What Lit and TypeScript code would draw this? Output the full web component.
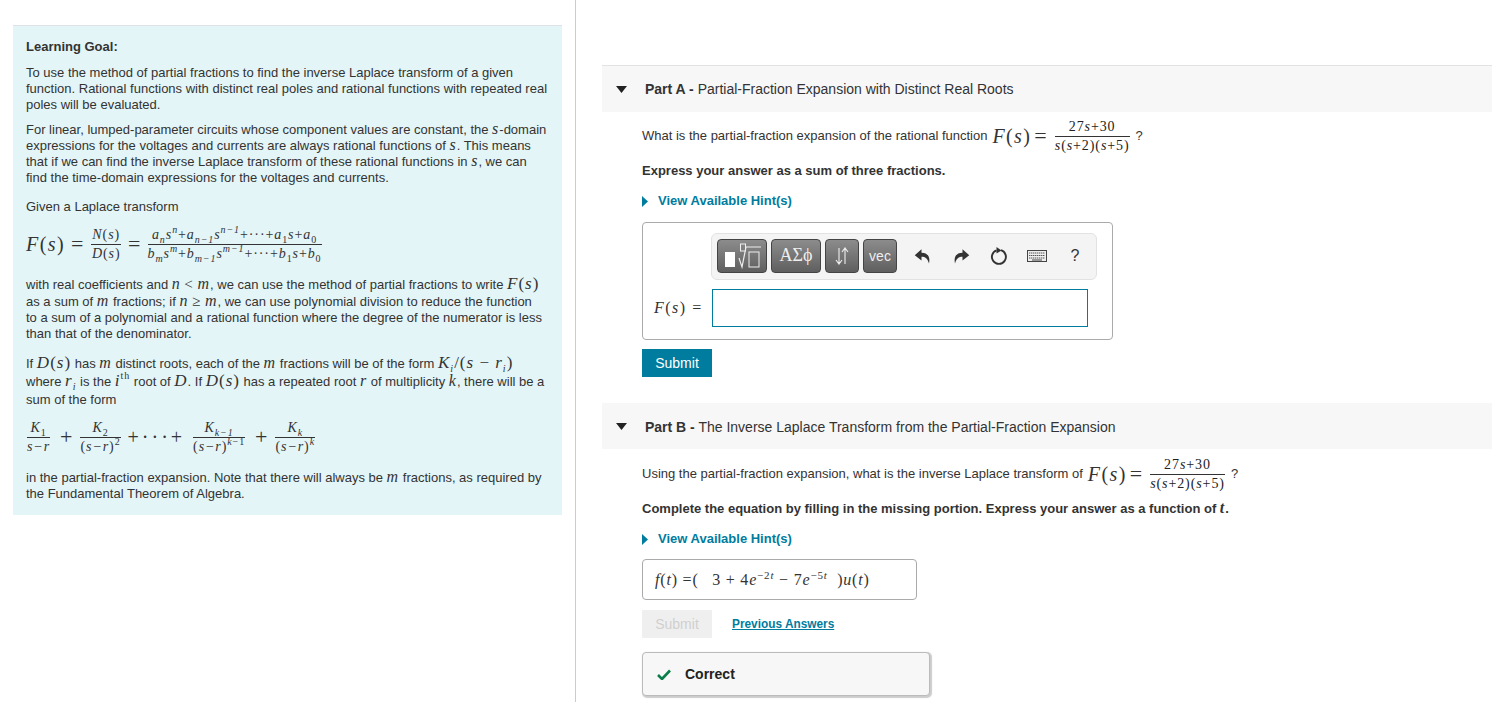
import { LitElement, html, css } from "lit";
import { customElement } from "lit/decorators.js";

const F = html`<span class="m md"><i>F</i>(<i>s</i>)</span>`;
const m = (t: string) => html`<i class="v">${t}</i>`;
const D = html`<span class="m md"><i>D</i>(<i>s</i>)</span>`;
const frac = (n: unknown, d: unknown, cls = "") =>
  html`<span class="frac ${cls}"><span class="num">${n}</span><span class="den">${d}</span></span>`;
const q = html`<span class="eq big"><span class="mf"><i>F</i>(<i>s</i>)</span><span class="rel qr">=</span>${frac(
  html`27<i>s</i>+30`,
  html`<i>s</i>(<i>s</i>+2)(<i>s</i>+5)`,
  "qf"
)}</span>`;
const chevron = html`<svg class="caret" width="11" height="7" viewBox="0 0 11 7"><path d="M0 0H11L5.5 7Z" fill="#222"/></svg>`;
const hintArrow = html`<svg width="6" height="11" viewBox="0 0 6 11"><path d="M0 0L6 5.5L0 11Z" fill="#007c9e"/></svg>`;

@customElement("app-root")
export class AppRoot extends LitElement {
  static styles = css`
    :host { display: block; height: 702px; overflow: hidden; background: #fff; color: #333; font: 13px/16px "Liberation Sans", Arial, sans-serif; }
    * { box-sizing: border-box; }
    .page { display: flex; height: 702px; }
    .left { width: 576px; flex: none; border-right: 1px solid #ccc; padding: 25px 13px 0; }
    .goal { width: 549px; height: 490px; background: #e4f5f7; border-top: 1px solid #dde3e5; padding: 13px 13px 0; }
    p { margin: 0; white-space: nowrap; }
    .g { font-weight: bold; }
    .mt10 { margin-top: 10px; } .mt9 { margin-top: 9px; } .mt13 { margin-top: 13px; } .mt14 { margin-top: 14px; } .mt11 { margin-top: 11px; } .mt15 { margin-top: 15px; }
    .tall { line-height: 18px; }
    .st { display: inline-block; width: 0; height: 5px; vertical-align: -5px; }
    .m, .v { font-family: "Liberation Serif", serif; font-size: 15px; line-height: 0; letter-spacing: 1px; }
    .v { font-style: italic; font-size: 16px; }
    .md { font-size: 17px; }
    .m sub, .m sup { font-size: 10px; line-height: 0; }
    .eqrow { display: flex; align-items: center; height: 36px; font-family: "Liberation Serif", serif; }
    .fx { padding-left: 1px; }
    .mf { font-size: 20px; white-space: nowrap; letter-spacing: 1.4px; }
    .rel { font-size: 22px; margin: 0 8px 0 6px; }
    .rel2 { margin: 0 7px 0 7px; }
    .qr { margin: 0 8px 0 3px; }
    .plus { font-size: 22px; margin: 0 8px 0 10px; }
    .more { letter-spacing: 3px; margin: 0 8px 0 7px; font-size: 20px; }
    .frac { display: inline-flex; flex-direction: column; align-items: center; text-align: center; font-family: "Liberation Serif", serif; font-size: 14px; line-height: 14px; white-space: nowrap; letter-spacing: .9px; }
    .num { border-bottom: 1px solid #333; padding: 0 1px 2px; width: 100%; }
    .den { padding-top: 2px; }
    .frac sub, .frac sup { font-size: 10px; line-height: 0; }
    .right { flex: 1; padding: 65px 0 0 26px; }
    .head { height: 47px; background: #f7f7f7; border-top: 1px solid #e2e2e2; display: flex; align-items: center; font-size: 14px; padding-left: 14px; }
    .headb { border-top-color: #f7f7f7; height: 46px; }
    .caret { margin-right: 18px; }
    .body { padding-left: 40px; font-size: 13px; }
    .qrow { display: flex; align-items: center; height: 36px; margin-top: 6px; }
    .qb { margin-top: 7px; }
    .qrow .end { margin-left: 6px; }
    .eq { display: inline-flex; align-items: center; margin-left: 5px; font-family: "Liberation Serif", serif; }
    .qf { font-size: 14px; color: #222; letter-spacing: .9px; }
    .instr { font-weight: bold; margin-top: 9px; }
    .hint { display: flex; align-items: center; gap: 10px; color: #007c9e; font-weight: bold; margin-top: 14px; font-size: 13px; }
    .box { width: 471px; height: 118px; border: 1px solid #aaa; border-radius: 4px; margin-top: 13px; padding: 10px 24px 0 11px; }
    .bar { width: 386px; height: 47px; margin-left: 57px; background: #f4f4f4; border: 1px solid #e2e2e2; border-radius: 6px; display: flex; align-items: center; padding: 0 0 2px 5px; }
    .tb { height: 34px; border-radius: 4px; border: 1px solid #444; background: linear-gradient(#8c8c8c, #5f5f5f); color: #eee; display: flex; align-items: center; justify-content: center; margin-right: 4px; }
    .t1 { width: 50px; } .t2 { width: 50px; font: 18px "Liberation Serif", serif; } .t3 { width: 34px; } .t4 { width: 34px; font-size: 14px; }
    .ic { width: 38px; display: flex; justify-content: center; align-items: center; color: #333; font-size: 16px; }
    .ic.first { margin-left: 3px; }
    .ansrow { display: flex; align-items: center; margin-top: 9px; }
    .lbl { width: 58px; font: 16px "Liberation Serif", serif; white-space: nowrap; letter-spacing: 1.5px; }
    .input { width: 376px; height: 38px; border: 1px solid #007c9e; background: #fff; }
    .btn { width: 70px; height: 28px; background: #007c9e; color: #fff; display: flex; align-items: center; justify-content: center; font-size: 14px; }
    .submit { margin-top: 9px; margin-bottom: 26px; }
    .ans { width: 275px; height: 41px; border: 1px solid #aaa; border-radius: 4px; margin-top: 12px; display: flex; align-items: center; padding-left: 12px; font: 16px "Liberation Serif", serif; white-space: pre; letter-spacing: .8px; }
    .ans sup { font-size: 11px; line-height: 0; }
    .sp { margin-left: 4px; }
    .actions { display: flex; align-items: center; margin-top: 10px; }
    .dis { background: #efefef; color: #cfcfcf; }
    .prev { margin-left: 20px; color: #007c9e; font-weight: bold; text-decoration: underline; font-size: 11.85px; }
    .ok { width: 288px; height: 44px; margin-top: 14px; background: #f7f7f7; border: 1px solid #bbb; border-radius: 4px; box-shadow: 1px 1px 1px 1px #ccc; display: flex; align-items: center; padding-left: 14px; gap: 14px; font-weight: bold; font-size: 14px; color: #222; }
  `;

  render() {
    return html`<div class="page">
      <div class="left"><div class="goal">
        <p class="g">Learning Goal:</p>
        <p class="mt10">To use the method of partial fractions to find the inverse Laplace transform of a given<br>function. Rational functions with distinct real poles and rational functions with repeated real<br>poles will be evaluated.</p>
        <p class="mt9">For linear, lumped-parameter circuits whose component values are constant, the ${m("s")}-domain<br>expressions for the voltages and currents are always rational functions of ${m("s")}. This means<br>that if we can find the inverse Laplace transform of these rational functions in ${m("s")}, we can<br>find the time-domain expressions for the voltages and currents.</p>
        <p class="mt13">Given a Laplace transform</p>
        <div class="eqrow mt11">
          <span class="mf"><i>F</i>(<i>s</i>)</span><span class="rel">=</span>
          ${frac(html`<i>N</i>(<i>s</i>)`, html`<i>D</i>(<i>s</i>)`)}
          <span class="rel rel2">=</span>
          ${frac(html`<i>a<sub>n</sub>s<sup>n</sup></i>+<i>a<sub>n−1</sub>s<sup>n−1</sup></i>+···+<i>a</i><sub>1</sub><i>s</i>+<i>a</i><sub>0</sub>`, html`<i>b<sub>m</sub>s<sup>m</sup></i>+<i>b<sub>m−1</sub>s<sup>m−1</sup></i>+···+<i>b</i><sub>1</sub><i>s</i>+<i>b</i><sub>0</sub>`)}
        </div>
        <p class="mt15"><span class="st"></span>with real coefficients and ${m("n")} <span class="m">&lt;</span> ${m("m")}, we can use the method of partial fractions to write ${F}<br>as a sum of ${m("m")} fractions; if ${m("n")} <span class="m">≥</span> ${m("m")}, we can use polynomial division to reduce the function<br>to a sum of a polynomial and a rational function where the degree of the numerator is less<br>than that of the denominator.</p>
        <p class="mt13 tall">If ${D} has ${m("m")} distinct roots, each of the ${m("m")} fractions will be of the form <span class="m md"><i>K<sub>i</sub></i>/(<i>s</i> − <i>r<sub>i</sub></i>)</span><br>where <span class="m md"><i>r<sub>i</sub></i></span> is the <span class="m md"><i>i</i><sup>th</sup></span> root of <span class="m md"><i>D</i></span>. If ${D} has a repeated root ${m("r")} of multiplicity ${m("k")}, there will be a<br>sum of the form</p>
        <div class="eqrow fx mt10">
          ${frac(html`<i>K</i><sub>1</sub>`, html`<i>s−r</i>`)}<span class="plus">+</span>
          ${frac(html`<i>K</i><sub>2</sub>`, html`(<i>s−r</i>)<sup>2</sup>`)}<span class="plus more">+···+</span>
          ${frac(html`<i>K<sub>k−1</sub></i>`, html`(<i>s−r</i>)<sup><i>k</i>−1</sup>`)}<span class="plus">+</span>
          ${frac(html`<i>K<sub>k</sub></i>`, html`(<i>s−r</i>)<sup><i>k</i></sup>`)}
        </div>
        <p class="mt15">in the partial-fraction expansion. Note that there will always be ${m("m")} fractions, as required by<br>the Fundamental Theorem of Algebra.</p>
      </div></div>
      <div class="right">
        <div class="head">${chevron}<span><b>Part A -</b> Partial-Fraction Expansion with Distinct Real Roots</span></div>
        <div class="body">
          <div class="qrow">What is the partial-fraction expansion of the rational function ${q}<span class="end">?</span></div>
          <div class="instr">Express your answer as a sum of three fractions.</div>
          <div class="hint">${hintArrow}View Available Hint(s)</div>
          <div class="box">
            <div class="bar">
              <div class="tb t1"><svg width="38" height="26" viewBox="0 0 38 26"><rect x="2" y="9" width="10" height="15" fill="#fff"/><rect x="17.5" y="1" width="5" height="7" fill="none" stroke="#eee"/><path d="M16 15L19 24L23 4H38" fill="none" stroke="#eee" stroke-width="1.2"/><rect x="26" y="9" width="10" height="15" fill="none" stroke="#eee"/></svg></div>
              <div class="tb t2">ΑΣϕ</div>
              <div class="tb t3"><svg width="16" height="18" viewBox="0 0 16 18"><path d="M5 1V16M2 13L5 17L8 13M11 17V2M8 5L11 1L14 5" fill="none" stroke="#eee" stroke-width="1.1"/></svg></div>
              <div class="tb t4">vec</div>
              <div class="ic first"><svg width="18" height="18" viewBox="0 0 24 24"><path d="M10 3L1 11L10 18V13C15 13 18 15 20 22C22 13 18 7.5 10 7.5Z" fill="#333"/></svg></div>
              <div class="ic"><svg width="18" height="18" viewBox="0 0 24 24"><path d="M14 3L23 11L14 18V13C9 13 6 15 4 22C2 13 6 7.5 14 7.5Z" fill="#333"/></svg></div>
              <div class="ic"><svg width="18" height="18" viewBox="0 0 18 18"><path d="M6.5 3.3A7 7 0 1 0 11 3.2" fill="none" stroke="#333" stroke-width="1.9"/><path d="M6.5 0L11.5 3.5L6.5 6.5Z" fill="#333"/></svg></div>
              <div class="ic"><svg width="20" height="12" viewBox="0 0 20 12"><rect x=".5" y=".5" width="19" height="11" fill="#eee" stroke="#444"/><path d="M2 3H18M2 5.5H18M2 8H18" stroke="#555" stroke-dasharray="1.4 .6"/><path d="M5 10H15" stroke="#444"/></svg></div>
              <div class="ic">?</div>
            </div>
            <div class="ansrow"><span class="lbl"><i>F</i>(<i>s</i>) =</span><div class="input"></div></div>
          </div>
          <div class="btn submit">Submit</div>
        </div>
        <div class="head headb">${chevron}<span><b>Part B -</b> The Inverse Laplace Transform from the Partial-Fraction Expansion</span></div>
        <div class="body">
          <div class="qrow qb">Using the partial-fraction expansion, what is the inverse Laplace transform of ${q}<span class="end">?</span></div>
          <div class="instr">Complete the equation by filling in the missing portion. Express your answer as a function of ${m("t")}.</div>
          <div class="hint">${hintArrow}View Available Hint(s)</div>
          <div class="ans"><span><i>f</i>(<i>t</i>) =(  <span class="sp">3 + 4<i>e</i><sup>−2<i>t</i></sup> − 7<i>e</i><sup>−5<i>t</i></sup>  )<i>u</i>(<i>t</i>)</span></span></div>
          <div class="actions"><div class="btn dis">Submit</div><span class="prev">Previous Answers</span></div>
          <div class="ok"><svg width="14" height="11" viewBox="0 0 14 11"><path d="M1 6L5 10L13 1.5" fill="none" stroke="#0a7d4a" stroke-width="2.6"/></svg>Correct</div>
        </div>
      </div>
    </div>`;
  }
}
